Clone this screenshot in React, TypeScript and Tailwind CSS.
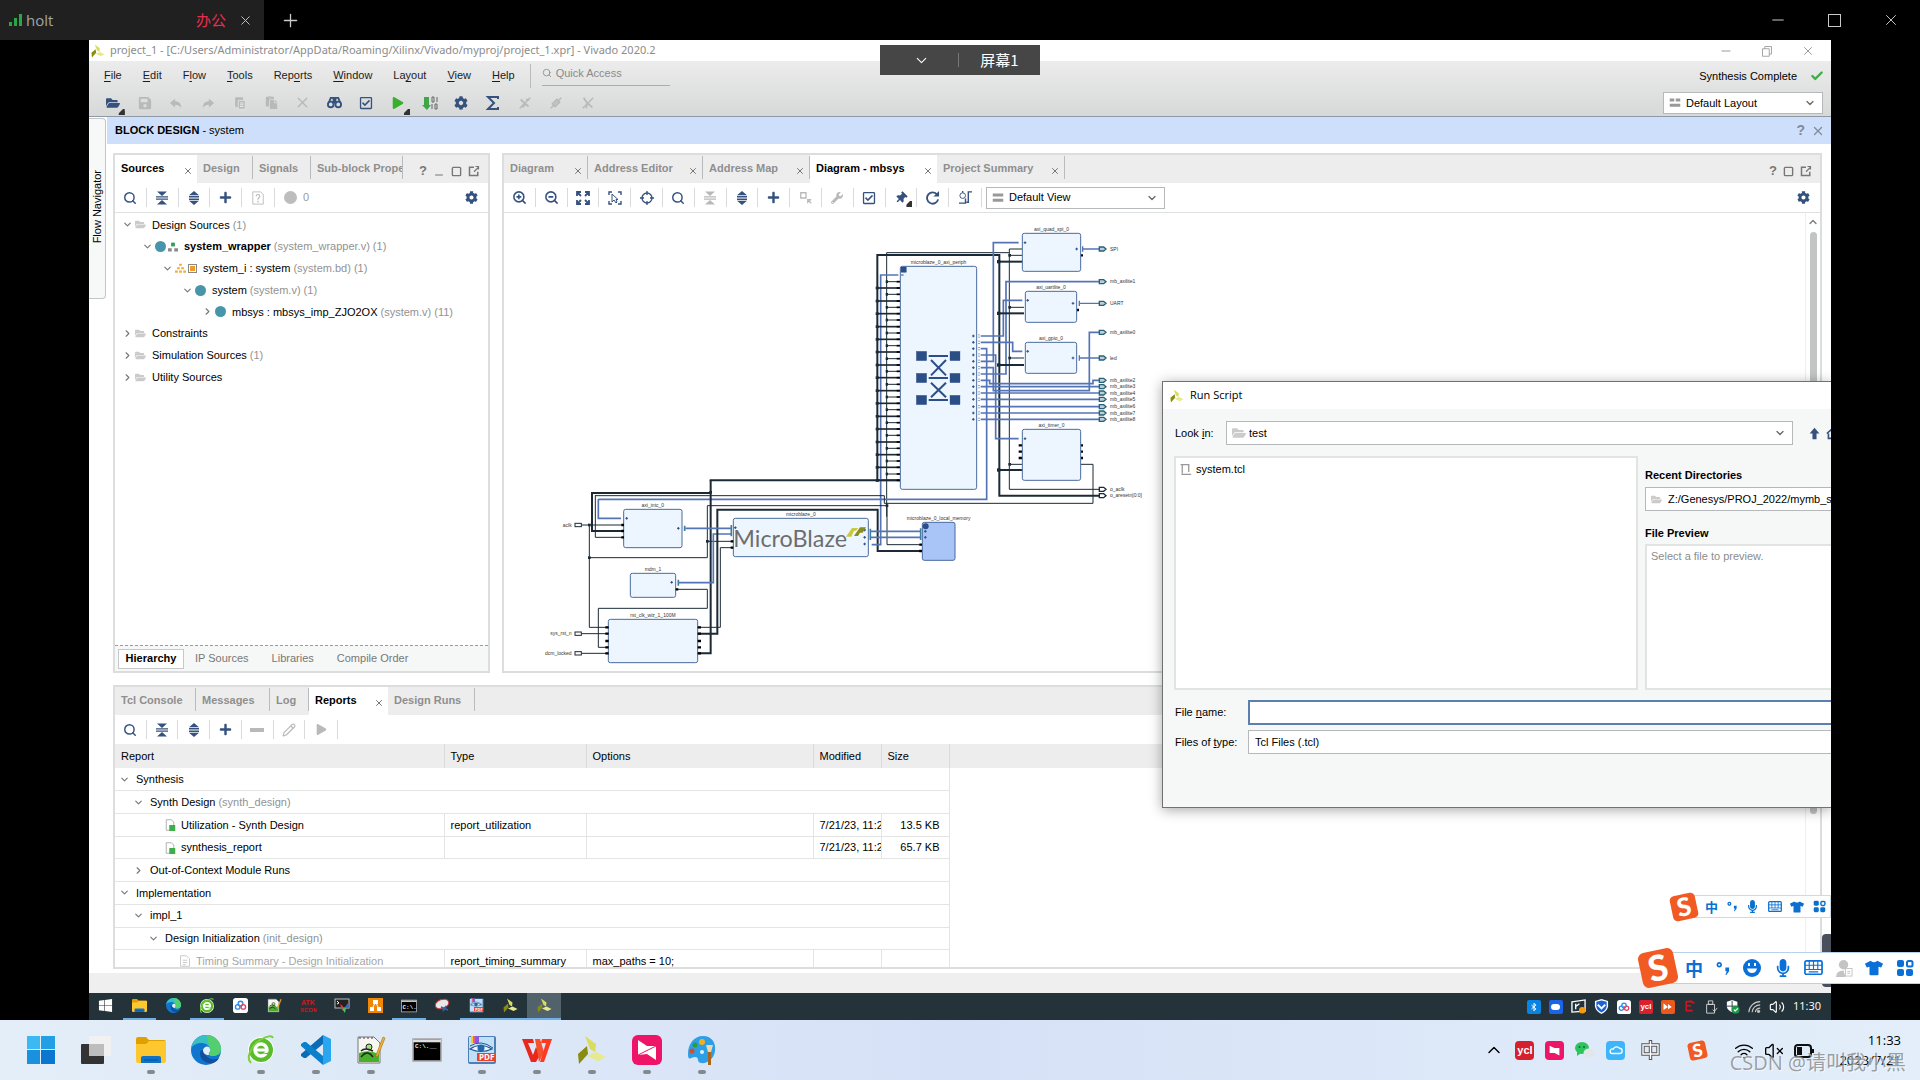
import type { ReactNode } from "react";
import {
  FaBinoculars,
  FaCog,
  FaCopy,
  FaFolderOpen,
  FaMicrophone,
  FaPaste,
  FaPlay,
  FaPlus,
  FaRegCheckSquare,
  FaSave,
  FaThumbtack,
  FaTshirt,
  FaWindows,
  FaWrench,
} from "react-icons/fa";
import {
  Check,
  ChevronDown,
  ChevronRight,
  ChevronUp,
  Minus,
  Pencil,
  Plus,
  Search,
  Square,
  Volume2,
  VolumeX,
  Wifi,
  X,
  ZoomIn,
  ZoomOut,
} from "lucide-react";

/* ---------- small drawings ---------- */

function Glyph({ children, size = 16, className = "" }: { children: ReactNode; size?: number; className?: string }) {
  return (
    <svg width={size} height={size} viewBox="0 0 16 16" fill="none" stroke="currentColor" className={className}>
      {children}
    </svg>
  );
}

function XilinxLogo({ size = 14 }: { size?: number }) {
  return (
    <svg width={size} height={size} viewBox="0 0 30 30">
      <path d="M8 1 L19 9 L18 17 L13 14 Z" fill="#d9dc5c" />
      <path d="M10 11 L11 19 L2 29 L1 19 Z" fill="#8a8c0e" />
      <path d="M10 21 L19 17 L29 22 L21 26 Z" fill="#e6e98c" />
    </svg>
  );
}

function Collapse() {
  return (
    <Glyph>
      <path d="M2 6.8 H14 M2 9.2 H14" strokeWidth="1.2" />
      <path d="M3 1.5 H13 L8 6 Z M3 14.5 H13 L8 10 Z" fill="currentColor" stroke="none" />
    </Glyph>
  );
}

function Expand() {
  return (
    <Glyph>
      <path d="M3 6.8 H13 M3 9.2 H13" strokeWidth="1.4" />
      <path d="M3 5.2 H13 L8 1 Z M3 10.8 H13 L8 15 Z" fill="currentColor" stroke="none" />
    </Glyph>
  );
}

function Fit() {
  return (
    <Glyph>
      <path d="M2 6 V2 H6 M10 2 H14 V6 M14 10 V14 H10 M6 14 H2 V10 M2 2 L6 6 M14 2 L10 6 M14 14 L10 10 M2 14 L6 10" strokeWidth="1.8" />
    </Glyph>
  );
}

function SelectArea() {
  return (
    <Glyph>
      <path d="M2 5 V2 H5 M11 2 H14 V5 M14 11 V14 H11 M5 14 H2 V11" strokeWidth="1.4" />
      <path d="M5 4 V12 L7 10 L9 13 L10 12 L9 9.5 H11 Z" />
    </Glyph>
  );
}

function Target() {
  return (
    <Glyph>
      <circle cx="8" cy="8" r="5" strokeWidth="1.3" />
      <path d="M8 1 V5 M8 11 V15 M1 8 H5 M11 8 H15" strokeWidth="1.3" />
    </Glyph>
  );
}

function Float() {
  return (
    <Glyph size={12}>
      <path d="M8 3 H2 V14 H13 V9" strokeWidth="2" />
      <path d="M8 9 L14 3 M10 2 H14 V6" strokeWidth="1.6" />
    </Glyph>
  );
}

function Bars() {
  return (
    <Glyph size={12} className="text-[#999]">
      <path d="M1 4 H15 M1 11 H15" strokeWidth="4" />
    </Glyph>
  );
}

function SogouLogo({ className }: { className: string }) {
  return (
    <svg viewBox="0 0 40 40" className={className}>
      <g transform="rotate(-12 20 20)">
        <rect x="3" y="3" width="34" height="34" rx="6" fill="#f15a22" />
        <text x="20" y="32" textAnchor="middle" fontSize="34" fontWeight="900" fontFamily="Lato, sans-serif" fill="#fff">
          S
        </text>
      </g>
    </svg>
  );
}

function EdgeIcon({ size }: { size: number }) {
  return (
    <svg width={size} height={size} viewBox="0 0 30 30">
      <circle cx="15" cy="15" r="15" fill="#0f76cf" />
      <path d="M0 13 C2 4 9 0 15 0 C24 0 30 7 30 14 C30 19 26 21 22 21 C18 21 17 19 19 17 C20 12 16 8 11 8 C6 8 2 10 0 13 Z" fill="#37bfc4" />
      <path d="M16 0 C24 0 30 7 30 14 C30 19 26 21 22 21 C18 21 17 19 19 17 C20 14 19 12 18 11 Z" fill="#55cf6e" />
      <path d="M9 18 C9 25 15 29 22 28 C25 27 27 25 28 23 C22 26 15 24 12 15 C10 15 9 16 9 18 Z" fill="#124f9c" />
      <path d="M12 15 C13 11 18 10 19 14 C20 17 17 17 18 20 C14 20 12 18 12 15 Z" fill="#e3edf9" />
    </svg>
  );
}

function GreenE({ size }: { size: number }) {
  return (
    <svg width={size} height={size} viewBox="0 0 30 30">
      <circle cx="15" cy="15" r="13" fill="#fff" />
      <circle cx="15" cy="15" r="12" fill="#59bd2b" />
      <circle cx="15" cy="15" r="6" fill="none" stroke="#fff" strokeWidth="3.4" />
      <path d="M9 15 H22" stroke="#fff" strokeWidth="3" />
      <path d="M16 19 H24 V17 Z" fill="#59bd2b" />
      <path d="M5 28 C0 24 4 11 14 5 C21 1 26 0 27 3" fill="none" stroke="#7ccf3e" strokeWidth="2" />
    </svg>
  );
}

function Explorer({ size }: { size: number }) {
  return (
    <svg width={size} height={size} viewBox="0 0 30 30">
      <path d="M0 4 Q0 2 2 2 H10 L13 5 H28 Q30 5 30 7 V12 H0 Z" fill="#e0a100" />
      <path d="M0 9 H10 L13 6 H30 V26 Q30 28 28 28 H2 Q0 28 0 26 Z" fill="#fdc72f" />
      <path d="M5 28 V23 Q5 21 7 21 H23 Q25 21 25 23 V28 Z" fill="#1173c7" />
      <path d="M8 25 H22" stroke="#0b4f90" strokeWidth="1" />
    </svg>
  );
}

function Notepad({ size }: { size: number }) {
  return (
    <svg width={size} height={size} viewBox="0 0 30 30">
      <path d="M2 2 H18 L24 8 V28 H2 Z" fill="#f7f7f2" stroke="#777" />
      <path d="M3 18 Q12 14 23 19 V27 H3 Z" fill="#48b02c" />
      <path d="M4 2 V4 M8 2 V4 M12 2 V4 M16 2 V4" stroke="#444" />
      <circle cx="13" cy="12" r="3" fill="#a8e27c" stroke="#222" />
      <path d="M5 16 Q9 12 17 16 M7 20 Q12 15 17 22 M5 22 L9 18" stroke="#222" strokeWidth="1.5" fill="none" />
      <path d="M27 2 L29 3 L22 21 L20 22 V20 Z" fill="#f2b233" stroke="#a66a14" strokeWidth="0.6" />
    </svg>
  );
}

function Terminal({ size, label }: { size: number; label: string }) {
  return (
    <svg width={size} height={size} viewBox="0 0 30 30">
      <rect x="1" y="4" width="28" height="22" fill="#000" stroke="#aaa" strokeWidth="1.6" />
      <path d="M1 6 H29" stroke="#ddd" strokeWidth="2.6" />
      <text x="3" y={label.length > 4 ? 13 : 20} fontSize={label.length > 4 ? 6 : 11} fontFamily="Liberation Mono, monospace" fontWeight="700" fill="#eee">
        {label}
      </text>
    </svg>
  );
}

function PdfEye({ size }: { size: number }) {
  return (
    <svg width={size} height={size} viewBox="0 0 30 30">
      <rect x="1" y="1" width="28" height="28" rx="2" fill="#4d7fb5" />
      <rect x="2" y="2" width="25" height="25" fill="#bfe0f6" />
      <path d="M4 1 H6 V8 H4 Z" fill="#f2ce2b" />
      <path d="M6 1 H8 V8 H6 Z" fill="#e85a9b" />
      <path d="M8 1 H12 V8 H8 Z" fill="#8a5be0" />
      <path d="M3 14 Q13 7 25 14 Q14 19 3 14 Z" fill="#eef7ff" stroke="#21588f" strokeWidth="1.2" />
      <path d="M3 11 Q14 4 26 13" fill="none" stroke="#21588f" />
      <circle cx="14" cy="13" r="3.5" fill="#1f68ad" />
      <rect x="10" y="18" width="18" height="8" fill="#e8432a" />
      <text x="12" y="25" fontSize="8" fontWeight="700" fontFamily="Open Sans, sans-serif" fill="#fff">
        PDF
      </text>
    </svg>
  );
}

function CloudRings({ size }: { size: number }) {
  return (
    <svg width={size} height={size} viewBox="0 0 16 16">
      <rect width="16" height="16" rx="3" fill="#fff" />
      <circle cx="8" cy="6" r="2.5" fill="none" stroke="#2a8df0" strokeWidth="1.5" />
      <circle cx="5" cy="9.5" r="2.4" fill="none" stroke="#2a8df0" strokeWidth="1.5" />
      <circle cx="11" cy="9.5" r="2.4" fill="none" stroke="#e8415f" strokeWidth="1.5" />
    </svg>
  );
}

/* ---------- shared controls ---------- */

function IconButton({ label, muted, children, menu }: { label: string; muted?: boolean; children: ReactNode; menu?: boolean }) {
  return (
    <button
      aria-label={label}
      className={`relative flex items-center justify-center ${muted ? "text-[#b9b9b9]" : "text-[#35527f]"}`}
    >
      {children}
      {menu && (
        <span className="absolute right-1 bottom-0 border-4 border-t-transparent border-l-transparent border-r-[#333] border-b-[#333] [clip-path:inset(2px_0_0_2px)]" />
      )}
    </button>
  );
}

type Tool = [string, ReactNode, ("muted" | "menu")?];

function ToolStrip({ tools, className }: { tools: Tool[]; className: string }) {
  return (
    <div className={`grid h-[19px] divide-x divide-[#d8dadb] border-r border-[#d8dadb] ${className}`}>
      {tools.map(([label, icon, kind], i) => (
        <IconButton key={i} label={label} muted={kind === "muted"} menu={kind === "menu"}>
          {icon}
        </IconButton>
      ))}
    </div>
  );
}

interface TabDef {
  name: string;
  width: string;
  active?: boolean;
  closable?: boolean;
}

function TabRow({ tabs, children }: { tabs: TabDef[]; children?: ReactNode }) {
  return (
    <div className="flex h-[28px] shrink-0 items-stretch bg-[#ededed] font-bold text-[#8f8f8f]">
      {tabs.map((t) => (
        <div key={t.name} className={`flex items-stretch overflow-hidden ${t.width} ${t.active ? "bg-white text-black" : ""}`}>
          <button className="flex-1 overflow-hidden pb-px pl-[6px] text-left whitespace-nowrap">{t.name}</button>
          {t.closable && (
            <button aria-label={`Close ${t.name}`} className="w-[14px] shrink-0 pt-1 text-[#777]">
              <X size={10} strokeWidth={2.4} />
            </button>
          )}
          {!t.active && <span className="mt-px mb-1 w-px bg-[#b8bcbf]" />}
        </div>
      ))}
      <div className="ml-auto flex items-center gap-[6px] pt-1 pr-[8px] text-[#777]">{children}</div>
    </div>
  );
}

function Picker({ label, value, className, icon }: { label: string; value: string; className: string; icon?: ReactNode }) {
  return (
    <span className={`relative flex shrink-0 items-center border border-[#b5b9bc] bg-white ${className}`}>
      {icon && <span className="pointer-events-none absolute left-[5px]">{icon}</span>}
      <select aria-label={label} className={`h-full w-full appearance-none bg-transparent text-black outline-none ${icon ? "pl-[22px]" : "pl-[6px]"}`}>
        <option>{value}</option>
      </select>
      <ChevronDown size={12} strokeWidth={2.5} className="pointer-events-none absolute right-[6px] text-[#666]" />
    </span>
  );
}

/* ---------- application header ---------- */

const menus = [
  ["", "F", "ile"],
  ["", "E", "dit"],
  ["F", "l", "ow"],
  ["", "T", "ools"],
  ["Rep", "o", "rts"],
  ["", "W", "indow"],
  ["La", "y", "out"],
  ["", "V", "iew"],
  ["", "H", "elp"],
];

const sigma = (
  <Glyph>
    <path d="M13 4 V2 H3 L9 8 L3 14 H13 V12" strokeWidth="2" />
  </Glyph>
);

const struck = (d: string) => (
  <Glyph size={14}>
    <path d={d} strokeWidth="2" />
    <path d="M2 14 L14 2" strokeWidth="1.6" />
  </Glyph>
);

const mainTools: Tool[] = [
  ["Open", <FaFolderOpen size={14} />, "menu"],
  ["Save", <FaSave size={14} />, "muted"],
  ["Undo", <Glyph size={14}><path d="M1 8 L7 3 V6 Q14 6 14 14 Q12 10 7 10 V13 Z" fill="currentColor" stroke="none" /></Glyph>, "muted"],
  ["Redo", <Glyph size={14}><path d="M15 8 L9 3 V6 Q2 6 2 14 Q4 10 9 10 V13 Z" fill="currentColor" stroke="none" /></Glyph>, "muted"],
  [
    "Copy",
    <Glyph size={14}>
      <path d="M3 2 H11 V12 H3 Z" fill="currentColor" />
      <path d="M6 5 H14 V15 H6 Z" fill="currentColor" stroke="#e4e4e4" />
      <path d="M8 8 H12 M8 10 H12 M8 12 H12" stroke="#eee" />
    </Glyph>,
    "muted",
  ],
  ["Paste", <FaPaste size={13} />, "muted"],
  ["Delete", <X size={17} />, "muted"],
  [
    "Find",
    <Glyph size={15}>
      <circle cx="4" cy="10" r="3" strokeWidth="2" />
      <circle cx="12" cy="10" r="3" strokeWidth="2" />
      <path d="M2 8 L4 3 H7 V9 M14 8 L12 3 H9 V9 M7 6 H9" strokeWidth="2" />
    </Glyph>,
  ],
  ["Validate", <FaRegCheckSquare size={14} />],
  ["Run", <FaPlay size={12} className="text-[#38b02c]" />, "menu"],
  [
    "Generate bitstream",
    <Glyph>
      <path d="M2 2 H7 V10 H9 L5 15 L0 10 H2 Z" fill="#3fa64a" stroke="none" />
      <path d="M10 2 H12 V7 H10 Z M15 2 V7 M10 9 V14 M13 9 H15 V14 H13 Z" stroke="#666" />
    </Glyph>,
  ],
  ["Settings", <FaCog size={14} />],
  ["Report", sigma],
  ["Unhighlight", struck("M3 4 L12 12 M5 13 L9 9 M9 4 H13"), "muted"],
  ["Unmark", struck("M4 9 L9 4 L12 7 L7 12 Z"), "muted"],
  ["Clear", struck("M3 2 L7 8 L6 14 M7 8 L13 13"), "muted"],
];

function AppHeader() {
  return (
    <>
      <div className="flex h-[21px] items-center bg-white pl-[2px] font-['Noto_Sans',sans-serif] text-[11px] text-[#8b8b8b]">
        <XilinxLogo />
        <span className="ml-[5px] whitespace-nowrap">
          project_1 - [C:/Users/Administrator/AppData/Roaming/Xilinx/Vivado/myproj/project_1.xpr] - Vivado 2020.2
        </span>
        <div className="ml-auto flex w-[112px] items-center justify-between pr-[16px]">
          <button aria-label="Minimize"><Minus size={14} strokeWidth={1.5} /></button>
          <button aria-label="Restore">
            <Glyph size={12}><path d="M2 5 H11 V15 H2 Z M5 5 V2 H14 V12 H11" /></Glyph>
          </button>
          <button aria-label="Close"><X size={14} strokeWidth={1.5} /></button>
        </div>
      </div>
      <header className="flex h-[56px] justify-between border-b border-[#8d99a5] bg-linear-to-b from-[#ececec] to-[#d7d8d8]">
        <div>
          <div className="flex h-[29px] items-center">
            <nav className="flex gap-[21px] pl-[15px] text-[#1c1c1c]">
              {menus.map(([a, u, b]) => (
                <button key={a + u + b}>{a}<span className="underline underline-offset-2">{u}</span>{b}</button>
              ))}
            </nav>
            <div className="ml-[15px] flex h-6 items-center border-l border-[#bbb] pl-[11px]">
              <label className="flex h-5 w-[128px] items-center gap-1 border-b border-[#a9aeb2] pb-1 text-[#8b8b8b]">
                <Search size={10} className="shrink-0" />
                <input aria-label="Quick Access" placeholder="Quick Access" className="w-full bg-transparent outline-none placeholder:text-[#8b8b8b]" />
              </label>
            </div>
          </div>
          <div className="ml-2 grid h-[26px] w-[507px] grid-cols-16 pb-px">
            {mainTools.map(([label, icon, kind]) => (
              <IconButton key={label} label={label} muted={kind === "muted"} menu={kind === "menu"}>
                {icon}
              </IconButton>
            ))}
          </div>
        </div>
        <div className="flex flex-col items-end pr-[8px]">
          <div className="flex h-[31px] items-center gap-[13px] pb-px text-black">
            Synthesis Complete
            <Check size={14} strokeWidth={4} className="-mr-px text-[#3fae49]" />
          </div>
          <Picker
            label="Layout"
            value="Default Layout"
            className="h-[22px] w-[160px]"
            icon={<Glyph size={12} className="text-[#999]"><path d="M1 4 H7 M9 4 H15 M1 11 H15" strokeWidth="4" /></Glyph>}
          />
        </div>
      </header>
    </>
  );
}

/* ---------- sources panel ---------- */

const dot = <span className="h-[11px] w-[11px] rounded-full bg-[#4695aa]" />;
const folder = <FaFolderOpen size={11} className="text-[#cbcbcb]" />;
const modules = (
  <Glyph size={10}>
    <path d="M5 1 H11 V7 H5 Z" fill="#2f9e52" stroke="none" />
    <path d="M0 10 H6 V15 H0 Z M10 10 H16 V15 H10 Z" fill="#8a8a8a" stroke="none" />
  </Glyph>
);
const blockDesign = (
  <>
    <Glyph size={11}>
      <path d="M6 1 H10 V4 H6 Z M3 6 H7 V9 H3 Z M9 6 H13 V9 H9 Z M0 11 H4 V14 H0 Z M6 11 H10 V14 H6 Z M12 11 H16 V14 H12 Z" fill="#f0ad3a" stroke="none" />
    </Glyph>
    <span className="flex h-[9px] w-[9px] items-center justify-center border border-[#888] bg-white">
      <span className="h-[5px] w-[5px] bg-[#f19a2b]" />
    </span>
  </>
);

const tree = [
  { pad: "pl-[7px]", open: true, icon: folder, name: "Design Sources", note: "(1)" },
  { pad: "pl-[27px]", open: true, icon: <>{dot}{modules}</>, name: "system_wrapper", note: "(system_wrapper.v) (1)", bold: true },
  { pad: "pl-[47px]", open: true, icon: blockDesign, name: "system_i : system", note: "(system.bd) (1)" },
  { pad: "pl-[67px]", open: true, icon: dot, name: "system", note: "(system.v) (1)" },
  { pad: "pl-[87px]", open: false, icon: dot, name: "mbsys : mbsys_imp_ZJO2OX", note: "(system.v) (11)" },
  { pad: "pl-[7px]", open: false, icon: folder, name: "Constraints", note: "" },
  { pad: "pl-[7px]", open: false, icon: folder, name: "Simulation Sources", note: "(1)" },
  { pad: "pl-[7px]", open: false, icon: folder, name: "Utility Sources", note: "" },
];

const sourceTools: Tool[] = [
  ["Search", <Search size={14} strokeWidth={2.5} />],
  ["Collapse all", <Collapse />],
  ["Expand all", <Expand />],
  ["Add sources", <FaPlus size={13} />],
  ["Report", <Glyph size={14}><path d="M2 1 H11 L14 4 V15 H2 Z" /><path d="M6 6 Q6 4 8 4 Q10 4 10 6 Q10 7 8 9 V10 M8 11 V13" strokeWidth="1.4" /></Glyph>, "muted"],
];

function SourcesPanel() {
  return (
    <section className="flex w-[377px] shrink-0 flex-col border-2 border-[#dcdddd] bg-white">
      <TabRow
        tabs={[
          { name: "Sources", width: "w-[82px]", active: true, closable: true },
          { name: "Design", width: "w-[56px]" },
          { name: "Signals", width: "w-[58px]" },
          { name: "Sub-block Prope", width: "w-[92px]" },
        ]}
      >
        <b className="text-[13px]">?</b>
        <Minus size={12} className="mt-2" />
        <Square size={11} strokeWidth={3} />
        <Float />
      </TabRow>
      <div className="flex h-[30px] shrink-0 items-center border-b border-[#dfe0e0]">
        <ToolStrip tools={sourceTools} className="w-[160px] grid-cols-5" />
        <span className="ml-[9px] h-[13px] w-[13px] rounded-full bg-[#bdbdbd]" />
        <span className="ml-[6px] text-[#9a9a9a]">0</span>
        <button aria-label="Settings" className="mr-[10px] ml-auto text-[#35527f]"><FaCog size={13} /></button>
      </div>
      <div className="mt-px grid h-[174px] grid-rows-8">
        {tree.map((n) => (
          <div key={n.name} className={`flex items-center ${n.pad}`}>
            <button aria-label={`Toggle ${n.name}`} className="mr-[2px] text-[#777]">
              {n.open ? <ChevronDown size={11} strokeWidth={2.5} /> : <ChevronRight size={11} strokeWidth={2.5} />}
            </button>
            <span className="flex items-center gap-[2px]">{n.icon}</span>
            <span className={`ml-[6px] text-black ${n.bold ? "font-bold" : ""}`}>{n.name}</span>
            <span className="ml-[3px] text-[#929292]">{n.note}</span>
          </div>
        ))}
      </div>
      <div className="mt-auto flex h-[26px] items-center border-t border-dashed border-[#9c9c9c] bg-[#f6f7f7] pl-[3px] text-[#777]">
        <button className="h-5 w-[66px] border border-[#c6c8c9] bg-white font-bold text-black">Hierarchy</button>
        <button className="ml-[11px]">IP Sources</button>
        <button className="ml-[23px]">Libraries</button>
        <button className="ml-[23px]">Compile Order</button>
      </div>
    </section>
  );
}

/* ---------- block diagram ---------- */

const BLUE = "#5474b6";
const INK = "#1b2a36";

function Wire({ d, blue, thick }: { d: string; blue?: boolean; thick?: boolean }) {
  return <path d={d} fill="none" stroke={blue ? BLUE : INK} strokeWidth={blue ? 5 : thick ? 6 : 3} />;
}

function Block({ x, y, w, h, name, fill = "#edf6ff" }: { x: number; y: number; w: number; h: number; name: string; fill?: string }) {
  return (
    <>
      <rect x={x} y={y} width={w} height={h} rx="6" fill={fill} stroke="#4a6a9f" strokeWidth="3" />
      <text x={x + w / 2} y={y - 6} textAnchor="middle">{name}</text>
    </>
  );
}

function Port({ x, y, name, kind }: { x: number; y: number; name: string; kind: "bus" | "pin" | "in" }) {
  if (kind === "in") {
    return (
      <>
        <rect x={x} y={y - 5} width="19" height="10" fill="#fff" stroke={INK} strokeWidth="3" />
        <text x={x - 10} y={y + 5} textAnchor="end">{name}</text>
      </>
    );
  }
  return (
    <>
      <path d={`M${x} ${y - 6} h13 l7 6 l-7 6 h-13 Z`} fill={kind === "bus" ? "#b8d0d8" : "#fff"} stroke={kind === "bus" ? "#2a6175" : INK} strokeWidth="4" />
      <text x={x + 32} y={y + 5}>{name}</text>
    </>
  );
}

const masterPorts = [378, 397, 416, 435, 454, 473, 492, 511, 530, 549, 568, 590, 609, 628];
const outputs: [number, string][] = [
  [117, "SPI"],
  [215, "mb_axilite1"],
  [280, "UART"],
  [367, "mb_axilite0"],
  [444, "led"],
  [511, "mb_axilite2"],
  [530, "mb_axilite3"],
  [549, "mb_axilite4"],
  [568, "mb_axilite5"],
  [590, "mb_axilite6"],
  [609, "mb_axilite7"],
  [628, "mb_axilite8"],
];

// Drawn at three units to the pixel; each group holds one half of the design.
function Diagram() {
  const pins = Array.from({ length: 32 }, (_, i) => Math.round(215 + i * 19.22));
  return (
    <svg width="640" height="456" viewBox="0 0 1920 1368" fontFamily="Liberation Sans, sans-serif" fontSize="15" fill="#333" className="shrink-0">
      <g transform="translate(1068 -9)">
        <Wire d="M120 811 H-451" thick />
        <Wire d="M52 811 V135 H418 V857 H718" thick />
        <Wire d="M80 920 V128 H448 M487 117 H448 V838 H718" />
        <Wire d="M115 195 H62 V1004" blue />
        {pins.map((y, i) => (
          <g key={y}>
            <path d={`M${i % 2 ? 52 : 80} ${y} H120`} stroke={INK} strokeWidth={i % 2 ? 5 : 3} />
            <path d={`M110 ${y} H120`} stroke="#000" strokeWidth="5" />
            <rect x={i % 2 ? 47 : 77} y={y - 4} width={i % 2 ? 9 : 7} height="8" fill={INK} />
          </g>
        ))}
        <Wire d="M362 378 H430 V271 H487" blue />
        <Wire d="M362 397 H458 V424 H487" blue />
        <Wire d="M362 416 H380 V868 H-785" blue />
        <Wire d="M362 435 H407 V686 H476" blue />
        <Wire d="M362 454 H400 V98 H476" blue />
        <Wire d="M362 473 H400 V542 H688 V367 H718" blue />
        <Wire d="M362 492 H438 V215 H718" blue />
        <Wire d="M362 511 H389 V521 H699 V511 H718" blue />
        {[530, 549, 568, 590, 609, 628].map((y) => (
          <Wire key={y} d={`M362 ${y} H718`} blue />
        ))}
        {[117, 280, 444].map((y) => (
          <path key={y} d={`M${y === 117 ? 668 : 658} ${y} H718 M${y === 117 ? 668 : 658} ${y - 8} V${y + 8}`} stroke={BLUE} strokeWidth="4" />
        ))}
        {[[136, 155], [292, 310], [444, 465], [763, 780]].map(([a, b]) => (
          <g key={a}>
            <Wire d={`M448 ${a} H492`} />
            <Wire d={`M416 ${b} H492`} thick />
            <rect x="445" y={a - 4} width="8" height="8" fill={INK} />
            <rect x="411" y={b - 5} width="10" height="10" fill={INK} />
          </g>
        ))}
        <path d="M476 706 H487 M476 725 H487 M476 744 H487 M662 706 H669 M662 725 H669 M662 744 H669 M662 136 H669 M650 300 H657" stroke="#000" strokeWidth="7" />
        <Wire d="M662 763 H699 V880 H73 V857 H-795" />
        <Block x={121} y={169} w={229} h={669} name="microblaze_0_axi_periph" />
        <Block x={487} y={70} w={175} h={114} name="axi_quad_spi_0" />
        <Block x={496} y={244} w={154} h={93} name="axi_uartlite_0" />
        <Block x={496} y={397} w={154} h={93} name="axi_gpio_0" />
        <Block x={487} y={658} w={175} h={153} name="axi_timer_0" />
        <g fill="#2c4e86" stroke="#2c4e86">
          <rect x="123" y="171" width="16" height="16" />
          {[424, 490, 556].map((y) => (
            <g key={y}>
              <rect x="169" y={y} width="31" height="28" />
              <rect x="270" y={y} width="30" height="28" />
              <path d={`M206 ${y + 14} H264`} strokeWidth="6" />
            </g>
          ))}
          <path d="M213 450 L258 496 M258 450 L213 496 M213 518 L258 562 M258 518 L213 562" strokeWidth="6" />
          {masterPorts.map((y) => (
            <path key={y} d={`M336 ${y} h8 M340 ${y - 4} v8 M357 ${y - 5} v3 M357 ${y + 2} v3`} strokeWidth="3" />
          ))}
          <path d="M491 98 h8 M495 94 v8 M499 271 h8 M503 267 v8 M499 424 h8 M503 420 v8 M491 686 h8 M495 682 v8 M646 117 h8 M650 113 v8 M635 280 h8 M639 276 v8 M635 444 h8 M639 440 v8 M123 195 h8" strokeWidth="3" />
        </g>
        {outputs.map(([y, name]) => (
          <Port key={name} x={718} y={y} name={name} kind="bus" />
        ))}
        <Port x={718} y={838} name="o_aclk" kind="pin" />
        <Port x={718} y={857} name="o_aresetn[0:0]" kind="pin" />
      </g>
      <g transform="translate(78 741)">
        <Wire d="M281 213 H186 V99 H542" thick />
        <Wire d="M542 61 V580 H503" thick />
        <Wire d="M281 232 H196 V106" />
        <Wire d="M273 175 H205 V117" blue />
        <Wire d="M154 195 H281 M178 195 V502 H235 M178 293 H532 V137 H1071 M532 244 H610" />
        <Wire d="M1071 130 V254 H1176" />
        <Wire d="M445 368 H550 V222 H603" blue />
        <Wire d="M437 388 H532 V445 H205 V562 H235" />
        <Wire d="M503 502 H571 V263 H610" />
        <Wire d="M503 521 H562 V149 H1043 V273 H1176" thick />
        <Wire d="M154 521 H235 M154 580 H235" />
        <Wire d="M466 205 H603 M1022 214 H1172 M1022 232 H1172 M1025 254 H1054" blue />
        <path d="M464 197 V213 M445 359 V377 M604 195 V229 M1021 206 V240 M1172 205 V240" stroke="#3f7f9c" strokeWidth="5" />
        {[[178, 195], [178, 293], [532, 244], [1071, 137], [1042, 61], [542, 97]].map(([x, y]) => (
          <rect key={`${x}-${y}`} x={x - 4} y={y - 4} width="8" height="8" fill={INK} />
        ))}
        <Block x={281} y={148} w={175} h={115} name="axi_intc_0" />
        <Block x={301} y={340} w={136} h={72} name="mdm_1" />
        <Block x={235} y={478} w={268} h={130} name="rst_clk_wiz_1_100M" />
        <Block x={610} y={175} w={405} h={115} name="microblaze_0" />
        <Block x={1177} y={187} w={98} h={114} name="microblaze_0_local_memory" fill="#a9c4f6" />
        <path d="M274 195 h8 M274 213 h8 M274 232 h8 M226 502 h10 M226 521 h10 M226 543 h10 M226 562 h10 M226 580 h10 M503 502 h10 M503 521 h10 M503 543 h10 M503 562 h10 M503 580 h10 M437 388 h8 M602 244 h8 M602 263 h8 M1168 254 h8 M1168 273 h8" stroke="#000" strokeWidth="7" />
        <path d="M286 175 h8 M290 171 v8 M441 205 h8 M445 201 v8 M421 367 h8 M425 363 v8 M612 203 h8 M616 199 v8 M1000 210 h8 M1004 206 v8 M1000 232 h8 M1004 228 v8 M1000 252 h8 M1004 248 v8 M1182 214 h8 M1186 210 v8 M1182 232 h8 M1186 228 v8" stroke="#2c4e86" strokeWidth="3" />
        <circle cx="1187" cy="199" r="9" fill="#2c4e86" />
        <text x="610" y="262" fontSize="70" fontFamily="Lato, sans-serif" fill="#6d6d6d">MicroBlaze</text>
        <path d="M948 230 L966 204 H984 L978 212 H972 L964 230 Z" fill="#c9c93c" />
        <path d="M972 228 L990 202 H1008 L998 218 H990 L984 228 Z" fill="#8a8c1c" />
        <Port x={135} y={195} name="aclk" kind="in" />
        <Port x={135} y={521} name="sys_rst_n" kind="in" />
        <Port x={135} y={580} name="dcm_locked" kind="in" />
      </g>
    </svg>
  );
}

const diagramTools: Tool[] = [
  ["Zoom in", <ZoomIn size={15} strokeWidth={2.5} />],
  ["Zoom out", <ZoomOut size={15} strokeWidth={2.5} />],
  ["Zoom fit", <Fit />],
  ["Select area", <SelectArea />],
  ["Fit selection", <Target />],
  ["Search", <Search size={14} strokeWidth={2.5} />],
  ["Collapse", <Collapse />, "muted"],
  ["Expand", <Expand />],
  ["Add IP", <FaPlus size={13} />],
  ["Make external", <Glyph size={14}><path d="M2 2 H8 V8 H2 Z M10 10 L14 14 M10 14 V10 H14" strokeWidth="1.5" /></Glyph>, "muted"],
  ["Customize", <FaWrench size={12} />, "muted"],
  ["Validate design", <FaRegCheckSquare size={14} />],
  ["Pin", <FaThumbtack size={12} className="rotate-45" />, "menu"],
  ["Regenerate layout", <Glyph size={15}><path d="M13 5 A6 6 0 1 0 14 10" strokeWidth="2" /><path d="M15 1 V7 H9 Z" fill="currentColor" stroke="none" /></Glyph>],
  ["Optimize routing", <Glyph size={15}><circle cx="5" cy="6" r="3" /><path d="M5 1 V3 M1 14 H8 V9 M15 2 H11 V13 H9" strokeWidth="1.5" /></Glyph>],
];

function DiagramPanel() {
  return (
    <section className="flex min-w-0 flex-1 flex-col border-2 border-[#dcdddd] bg-white">
      <TabRow
        tabs={[
          { name: "Diagram", width: "w-[84px]", closable: true },
          { name: "Address Editor", width: "w-[115px]", closable: true },
          { name: "Address Map", width: "w-[107px]", closable: true },
          { name: "Diagram - mbsys", width: "w-[127px]", active: true, closable: true },
          { name: "Project Summary", width: "w-[128px]", closable: true },
        ]}
      >
        <b className="text-[13px]">?</b>
        <Square size={11} strokeWidth={3} />
        <Float />
      </TabRow>
      <div className="flex h-[30px] shrink-0 items-center border-b border-[#dfe0e0]">
        <ToolStrip tools={diagramTools} className="w-[478px] grid-cols-15" />
        <Picker label="View" value="Default View" className="ml-1 h-[22px] w-[179px]" icon={<Bars />} />
        <button aria-label="Settings" className="mr-[10px] ml-auto text-[#35527f]"><FaCog size={13} /></button>
      </div>
      <div className="flex min-h-0 flex-1 overflow-hidden">
        <Diagram />
        <div className="ml-auto flex w-[15px] flex-col items-center border-l border-[#eee] pt-[3px]">
          <ChevronUp size={12} strokeWidth={2.5} className="text-[#777]" />
          <span className="mt-1 h-[390px] w-[7px] rounded-full bg-[#c3c4c4]" />
        </div>
      </div>
    </section>
  );
}

/* ---------- reports panel ---------- */

const reportTools: Tool[] = [
  ["Search", <Search size={14} strokeWidth={2.5} />],
  ["Collapse all", <Collapse />],
  ["Expand all", <Expand />],
  ["Add report", <FaPlus size={13} />],
  ["Remove report", <Glyph><path d="M1 8 H15" strokeWidth="4" /></Glyph>, "muted"],
  ["Edit", <Pencil size={14} />, "muted"],
  ["Run", <FaPlay size={11} />, "muted"],
];

const done = (
  <Glyph size={12}>
    <path d="M3 1 H10 L13 4 V15 H3 Z" stroke="#999" />
    <path d="M7 8 H15 V16 H7 Z" fill="#3fae49" stroke="none" />
  </Glyph>
);
const pending = (
  <Glyph size={12} className="text-[#bbb]">
    <path d="M2 1 H10 L14 5 V15 H2 Z M5 7 H11 M5 10 H11 M5 13 H9" />
  </Glyph>
);

interface ReportRow {
  pad: string;
  name: string;
  note?: string;
  open?: boolean;
  icon?: ReactNode;
  cells?: [string, string, string, string];
}

const reports: ReportRow[] = [
  { pad: "pl-[4px]", name: "Synthesis", open: true },
  { pad: "pl-[18px]", name: "Synth Design", note: "(synth_design)", open: true },
  { pad: "pl-[49px]", name: "Utilization - Synth Design", icon: done, cells: ["report_utilization", "", "7/21/23, 11:29 AM", "13.5 KB"] },
  { pad: "pl-[49px]", name: "synthesis_report", icon: done, cells: ["", "", "7/21/23, 11:29 AM", "65.7 KB"] },
  { pad: "pl-[18px]", name: "Out-of-Context Module Runs", open: false },
  { pad: "pl-[4px]", name: "Implementation", open: true },
  { pad: "pl-[18px]", name: "impl_1", open: true },
  { pad: "pl-[33px]", name: "Design Initialization", note: "(init_design)", open: true },
  { pad: "pl-[64px]", name: "Timing Summary - Design Initialization", icon: pending, cells: ["report_timing_summary", "max_paths = 10;", "", ""] },
];

function ReportsPanel() {
  return (
    <section className="flex h-[284px] flex-col overflow-hidden border-2 border-[#dcdddd] bg-white">
      <TabRow
        tabs={[
          { name: "Tcl Console", width: "w-[81px]" },
          { name: "Messages", width: "w-[74px]" },
          { name: "Log", width: "w-[39px]" },
          { name: "Reports", width: "w-[79px]", active: true, closable: true },
          { name: "Design Runs", width: "w-[87px]" },
        ]}
      />
      <div className="flex h-[29px] shrink-0 items-center">
        <ToolStrip tools={reportTools} className="w-[223px] grid-cols-7" />
      </div>
      <div className="flex min-h-0 flex-1 overflow-hidden">
        <table className="h-[229px] w-full table-fixed border-collapse text-left text-black">
          <colgroup>
            <col className="w-[329px]" />
            <col className="w-[142px]" />
            <col className="w-[227px]" />
            <col className="w-[68px]" />
            <col className="w-[68px]" />
            <col />
          </colgroup>
          <thead className="bg-[#ededed]">
            <tr className="h-[24px]">
              {["Report", "Type", "Options", "Modified", "Size", ""].map((h) => (
                <th key={h} className="border-r border-[#d9dbdb] pl-[6px] font-normal last:border-r-0">{h}</th>
              ))}
            </tr>
          </thead>
          <tbody>
            {reports.map((r) => (
              <tr key={r.name} className="h-[22px]">
                <td colSpan={r.cells ? 1 : 5} className={`border-r border-b border-[#e3e5e5] ${r.pad}`}>
                  <span className="flex items-center">
                    {r.icon ? (
                      <span className="mr-[5px]">{r.icon}</span>
                    ) : (
                      <button aria-label={`Toggle ${r.name}`} className="mr-[6px] text-[#777]">
                        {r.open ? <ChevronDown size={11} strokeWidth={2.5} /> : <ChevronRight size={11} strokeWidth={2.5} />}
                      </button>
                    )}
                    <span className={r.icon === pending ? "text-[#a6a6a6]" : ""}>{r.name}</span>
                    <span className="ml-[3px] text-[#929292]">{r.note}</span>
                  </span>
                </td>
                {r.cells?.map((c, i) => (
                  <td key={i} className={`overflow-hidden border-r border-b border-[#e3e5e5] whitespace-nowrap ${i === 3 ? "pr-[9px] text-right" : "pl-[6px]"}`}>
                    {c}
                  </td>
                ))}
                <td />
              </tr>
            ))}
          </tbody>
        </table>
        <div className="flex w-[15px] shrink-0 flex-col items-center border-l border-[#eee]">
          <span className="mt-2 h-[62px] w-[7px] rounded-full bg-[#c3c4c4]" />
        </div>
      </div>
    </section>
  );
}

/* ---------- run script dialog ---------- */

function RunScriptDialog() {
  return (
    <div role="dialog" aria-label="Run Script" className="absolute top-[341px] right-0 flex h-[427px] w-[669px] flex-col overflow-hidden border border-r-0 border-[#6f7271] bg-[#f6f7f7] text-black shadow-[0_2px_12px_rgba(0,0,0,0.35)]">
      <div className="flex h-[27px] shrink-0 items-center gap-[6px] bg-white pl-[7px] font-['Open_Sans',sans-serif] text-[11px]">
        <XilinxLogo />
        Run Script
      </div>
      <div className="mt-3 flex items-center pl-3">
        <span className="w-[51px] shrink-0">Look <u>i</u>n:</span>
        <Picker label="Look in" value="test" className="h-[24px] w-[567px]" icon={<FaFolderOpen size={14} className="text-[#cbcbcb]" />} />
        <div className="ml-[15px] flex w-16 shrink-0 gap-[5px] text-[#35527f]">
          <button aria-label="Up one level">
            <Glyph size={13}><path d="M8 1 L14 8 H10.5 V15 H5.5 V8 H2 Z" fill="currentColor" stroke="none" /></Glyph>
          </button>
          <button aria-label="Home">
            <Glyph size={13}><path d="M1 8 L8 2 L15 8 M3 8 V14 H13 V8" strokeWidth="2" /></Glyph>
          </button>
        </div>
      </div>
      <div className="mt-[11px] flex h-[234px] gap-[7px] pl-[11px]">
        <ul className="w-[464px] shrink-0 border-2 border-[#e2e3e3] bg-white px-[3px] py-px">
          <li className="flex h-5 items-center gap-1">
            <Glyph size={13}><path d="M2 2 H12 V11 M4 2 V13 M3 14 H15" stroke="#999" strokeWidth="1.6" /></Glyph>
            system.tcl
          </li>
        </ul>
        <div className="flex w-[300px] shrink-0 flex-col">
          <b className="mt-[11px] leading-4">Recent Directories</b>
          <Picker label="Recent Directories" value="Z:/Genesys/PROJ_2022/mymb_sys/script/test" className="mt-[4px] h-[24px]" icon={<FaFolderOpen size={11} className="text-[#cbcbcb]" />} />
          <b className="mt-[14px] leading-4">File Preview</b>
          <div className="mt-[3px] flex-1 border-2 border-[#e2e3e3] bg-white px-1 py-[2px] text-[#8d8d8d]">Select a file to preview.</div>
        </div>
      </div>
      <div className="mt-[10px] grid grid-cols-[73px_640px] items-center gap-y-[5px] pl-3">
        <label htmlFor="file-name">File <u>n</u>ame:</label>
        <input id="file-name" className="h-[25px] border-2 border-[#5b7fae] bg-white px-1 outline-none" />
        <span>Files of <u>t</u>ype:</span>
        <Picker label="Files of type" value="Tcl Files (.tcl)" className="h-[24px]" />
      </div>
    </div>
  );
}

/* ---------- input method bars ---------- */

const keyboard = (cls: string) => (
  <svg viewBox="0 0 20 16" className={cls} fill="none" stroke="currentColor" strokeWidth="1.8">
    <rect x="1" y="1" width="18" height="14" rx="1.5" />
    <path d="M1 5.5 H19 M1 10 H19 M5.5 1 V10 M10 1 V10 M14.5 1 V10 M5 12.5 H15" strokeWidth="1.2" />
  </svg>
);

const apps = (cls: string) => (
  <svg viewBox="0 0 18 18" className={cls} fill="currentColor">
    <rect x="1" y="1" width="7" height="7" rx="2" />
    <rect x="11" y="2" width="5.5" height="5.5" rx="1.5" fill="none" stroke="currentColor" strokeWidth="2" />
    <rect x="1" y="10" width="7" height="7" rx="2" />
    <rect x="10" y="10" width="7" height="7" rx="2" />
  </svg>
);

const comma = (cls: string) => (
  <svg viewBox="0 0 16 16" className={cls}>
    <circle cx="3.5" cy="4" r="2" fill="none" stroke="currentColor" strokeWidth="1.8" />
    <path d="M10 7 h4 v4 l-3 4 h-1 l1.5 -4 h-1.5 Z" fill="currentColor" />
  </svg>
);

function ImeSmall() {
  return (
    <div className="absolute right-0 bottom-[102px] flex h-[23px] w-[141px] items-center border border-[#c9dcea] bg-white text-[#0a70d0]">
      <SogouLogo className="-ml-[22px] h-[30px] w-[30px] shrink-0" />
      <div className="ml-[6px] flex flex-1 items-center justify-between pr-1 font-['Noto_Sans_CJK_SC',sans-serif]">
        <b className="text-[13px] leading-5">中</b>
        {comma("w-[11px]")}
        <FaMicrophone size={13} />
        {keyboard("w-[14px]")}
        <FaTshirt size={14} />
        {apps("w-[13px]")}
      </div>
    </div>
  );
}

function ImeLarge() {
  return (
    <div className="absolute right-0 bottom-24 flex h-8 w-[272px] items-center border border-r-0 border-[#b9d2e8] bg-white text-[#0a70d8]">
      <SogouLogo className="-ml-[12px] h-[42px] w-[42px] shrink-0" />
      <div className="ml-[6px] flex flex-1 items-center justify-between pr-[6px] font-['Noto_Sans_CJK_SC',sans-serif]">
        <b className="text-[18px] leading-7">中</b>
        {comma("w-[15px]")}
        <svg viewBox="0 0 18 18" className="w-[18px]">
          <circle cx="9" cy="9" r="9" fill="currentColor" />
          <path d="M6 4 V7 M12 4 V7" stroke="#fff" strokeWidth="2" />
          <path d="M4 9.5 H14 Q13 14 9 14 Q5 14 4 9.5 Z" fill="#fff" />
        </svg>
        <FaMicrophone size={18} />
        {keyboard("w-[19px]")}
        <svg viewBox="0 0 18 18" className="w-[17px] text-[#c4c4c4]" fill="currentColor">
          <circle cx="8" cy="5" r="5" />
          <path d="M0 18 Q0 11 8 11 L10 18 Z" />
          <rect x="10" y="9" width="7" height="8" fill="#fff" stroke="currentColor" />
          <path d="M12 12 H15 M12 14 H15" stroke="currentColor" />
        </svg>
        <FaTshirt size={18} />
        {apps("w-[18px]")}
      </div>
    </div>
  );
}

/* ---------- taskbars ---------- */

const remoteApps: { name: string; icon: ReactNode; running?: boolean; active?: boolean }[] = [
  { name: "Start", icon: <FaWindows size={15} className="text-white" /> },
  { name: "Explorer", icon: <Explorer size={15} />, running: true },
  { name: "Edge", icon: <EdgeIcon size={15} /> },
  { name: "Browser", icon: <GreenE size={16} />, running: true },
  { name: "Netdisk", icon: <CloudRings size={15} /> },
  { name: "Notepad++", icon: <Notepad size={15} /> },
  {
    name: "XCOM",
    icon: (
      <svg width="17" height="15" viewBox="0 0 17 15" fontFamily="Liberation Sans, sans-serif" fontWeight="700" fill="#d3161c">
        <text x="1" y="7" fontSize="7">ATK</text>
        <text x="0" y="14" fontSize="6">XCOM</text>
      </svg>
    ),
  },
  {
    name: "Remote shell",
    icon: (
      <svg width="16" height="15" viewBox="0 0 16 15">
        <rect x="1" y="1" width="14" height="9" fill="#222" stroke="#bbb" />
        <path d="M3 3 L5 5 L3 6" stroke="#fff" fill="none" />
        <path d="M6 6 L9 8 L8 12 Z" fill="#e33" />
        <path d="M14 5 L15 10 L11 9 Z" fill="#36c" />
        <path d="M8 11 L12 10 L11 15 Z" fill="#4c4" />
      </svg>
    ),
  },
  {
    name: "Diagrams",
    icon: (
      <svg width="15" height="15" viewBox="0 0 15 15">
        <rect width="15" height="15" fill="#f08705" />
        <path d="M7.5 4 L4 11 M7.5 4 L11 11" stroke="#fff" />
        <path d="M5 2 H10 V6 H5 Z M2 9 H6 V13 H2 Z M9 9 H13 V13 H9 Z" fill="#fff" />
      </svg>
    ),
  },
  { name: "Command Prompt", icon: <Terminal size={16} label="C:\." />, running: true },
  {
    name: "Snipping",
    icon: (
      <svg width="16" height="15" viewBox="0 0 16 15">
        <ellipse cx="7" cy="6" rx="7" ry="4.5" fill="#e8e8e8" stroke="#c33" transform="rotate(-20 7 6)" />
        <path d="M6 9 L13 12 M8 13 L11 8" stroke="#2a6ab0" strokeWidth="1.6" />
      </svg>
    ),
  },
  { name: "PDF Viewer", icon: <PdfEye size={15} />, running: true },
  { name: "Vivado", icon: <XilinxLogo size={15} />, running: true },
  { name: "Vivado project", icon: <XilinxLogo size={15} />, running: true, active: true },
];

function Chip({ className, children }: { className: string; children?: ReactNode }) {
  return <span className={`flex h-[14px] w-[14px] items-center justify-center overflow-hidden rounded-xs text-[8px] font-bold text-white ${className}`}>{children}</span>;
}

function RemoteTaskbar() {
  return (
    <footer className="flex h-[27px] shrink-0 items-stretch bg-[#24333a] text-white">
      <div className="grid w-[472px] grid-cols-14">
        {remoteApps.map((a) => (
          <button
            key={a.name}
            aria-label={a.name}
            className={`flex items-center justify-center border-b-2 ${a.running ? "border-[#6fb0e8]" : "border-transparent"} ${a.active ? "bg-[#52626a]" : ""}`}
          >
            {a.icon}
          </button>
        ))}
      </div>
      <div className="ml-auto flex items-center gap-[8px] pr-[10px]">
        <Chip className="rounded-full bg-[#0a84e0]">
          <Glyph size={10}><path d="M4 5 L11 11 L8 14 V2 L11 5 L4 11" stroke="#fff" strokeWidth="1.6" /></Glyph>
        </Chip>
        <Chip className="bg-[#1d63e8]"><span className="h-[6px] w-[9px] rounded-full bg-white" /></Chip>
        <Glyph size={15} className="text-white">
          <path d="M1 3 L15 1 V13 L1 14 Z M5 5 V11 M5 8 L9 5" strokeWidth="1.4" />
          <circle cx="12" cy="12" r="3.5" fill="#f39c12" stroke="none" />
        </Glyph>
        <Glyph size={15}>
          <path d="M8 0 L15 2 V8 Q14 13 8 16 Q2 13 1 8 V2 Z" fill="#fff" stroke="none" />
          <path d="M8 1.5 L13.5 3 V8 Q13 12 8 14.5 Q3 12 2.5 8 V3 Z" fill="#1766d8" stroke="none" />
          <path d="M4 6 L8 10 L12 6" stroke="#fff" strokeWidth="2" />
        </Glyph>
        <CloudRings size={14} />
        <Chip className="bg-[#dc1f2e]">ycl</Chip>
        <Chip className="bg-[#ea5a1c]">
          <Glyph size={12}><path d="M2 3 L8 8 L2 12 Z M8 4 L13 8 L8 11 Z" fill="#fff" stroke="none" /></Glyph>
        </Chip>
        <Glyph size={13}><path d="M12 2 H4 V7 H10 M4 7 V13 H12 M8 1 L14 4" stroke="#d0141c" strokeWidth="2" /></Glyph>
        <Glyph size={14} className="text-[#ddd]"><path d="M5 1 H10 V5 H5 Z M3 5 H12 V15 H3 Z M10 11 L12 13 L15 9" /></Glyph>
        <Glyph size={14}>
          <path d="M7 0 L13 2 V8 Q12 12 7 14 Q2 12 1 8 V2 Z" fill="#fff" stroke="none" />
          <path d="M7 1 V13 M1 7 H13" stroke="#24333a" />
          <circle cx="11" cy="11" r="4.5" fill="#1a9c4b" stroke="none" />
          <path d="M9 11 L10.5 12.5 L13.5 9.5" stroke="#fff" strokeWidth="1.4" />
        </Glyph>
        <Glyph size={13} className="text-[#ccc]"><path d="M1 15 A14 14 0 0 1 15 2 M5 15 A10 10 0 0 1 15 6 M9 15 A6 6 0 0 1 15 10" strokeWidth="1.3" /><circle cx="13" cy="14" r="1.5" fill="currentColor" /></Glyph>
        <Volume2 size={16} strokeWidth={1.7} />
        <time className="font-['Open_Sans',sans-serif] text-[11px]">11:30</time>
      </div>
    </footer>
  );
}

const hostApps: { name: string; icon: ReactNode; running?: boolean }[] = [
  {
    name: "Start",
    icon: (
      <svg width="30" height="30" viewBox="0 0 30 30">
        <path d="M1 1 H14 V14 H1 Z" fill="#3cb9f2" />
        <path d="M15 1 H29 V14 H15 Z" fill="#239fe6" />
        <path d="M1 15 H14 V29 H1 Z" fill="#1a91de" />
        <path d="M15 15 H29 V29 H15 Z" fill="#0a76d0" />
      </svg>
    ),
  },
  {
    name: "Task view",
    icon: (
      <svg width="30" height="30" viewBox="0 0 30 30">
        <rect x="0" y="9" width="23" height="20" rx="1" fill="#333" />
        <rect x="8" y="1" width="22" height="20" rx="1" fill="#f1f1f1" />
        <rect x="8" y="9" width="15" height="12" fill="#bdbdbd" />
      </svg>
    ),
  },
  { name: "Explorer", icon: <Explorer size={30} />, running: true },
  { name: "Edge", icon: <EdgeIcon size={30} /> },
  { name: "Browser", icon: <GreenE size={30} />, running: true },
  {
    name: "Visual Studio Code",
    icon: (
      <svg width="30" height="30" viewBox="0 0 30 30">
        <path d="M22 0 L0 19 V21 L3 23 L5 23 L22 9 Z" fill="#0a6cb8" />
        <path d="M0 9 L3 7 L5 7 L22 21 V30 L0 11 Z" fill="#0b80cc" />
        <path d="M22 0 L30 4 V26 L22 30 Z" fill="#2aa5ef" />
      </svg>
    ),
    running: true,
  },
  { name: "Notepad++", icon: <Notepad size={30} />, running: true },
  { name: "Command Prompt", icon: <Terminal size={30} label={"C:\\.__"} /> },
  { name: "PDF Viewer", icon: <PdfEye size={30} />, running: true },
  {
    name: "WPS Office",
    icon: (
      <svg width="30" height="30" viewBox="0 0 30 30">
        <path d="M0 4 H11 L12 8 H6 L11 20 L14 12 L18 20 L14 27 H9 Z" fill="#e8281c" />
        <path d="M13 4 H18 L22 17 L17 27 Z" fill="#f6502c" />
        <path d="M20 4 H30 L22 27 H18 L24 8 H19 Z" fill="#ff3a20" />
      </svg>
    ),
    running: true,
  },
  { name: "Vivado", icon: <XilinxLogo size={30} />, running: true },
  {
    name: "Remote desktop",
    icon: (
      <svg width="30" height="30" viewBox="0 0 30 30">
        <rect width="30" height="30" rx="6" fill="#ee1467" />
        <path d="M6 5 L15 11 L24 11 V25 L15 19 L6 20 Z" fill="#fff" />
        <path d="M6 20 L24 11" stroke="#ee1467" />
      </svg>
    ),
    running: true,
  },
  {
    name: "Paint",
    icon: (
      <svg width="30" height="30" viewBox="0 0 30 30">
        <path d="M16 1 C25 1 29 8 28 16 C27 24 20 29 14 28 C9 27 13 22 8 22 C4 22 1 27 1 19 C1 9 7 1 16 1 Z" fill="#2c9fe8" />
        <circle cx="15" cy="7" r="3" fill="#f2b01e" />
        <circle cx="8" cy="10" r="2.5" fill="#2f9e3a" />
        <circle cx="5" cy="16" r="2.5" fill="#d1502c" />
        <circle cx="15" cy="17" r="2" fill="#dff0fd" />
        <path d="M19 10 H26 L24 17 H21 Z" fill="#f0d9a8" />
        <path d="M21 17 H24 V30 H21 Z" fill="#a9651c" />
      </svg>
    ),
    running: true,
  },
];

function HostTaskbar() {
  return (
    <footer className="flex h-[60px] shrink-0 items-stretch bg-linear-to-r from-[#e3eef8] via-[#d6e1f7] to-[#e3eefa] text-black">
      <div className="ml-[13px] grid w-[717px] grid-cols-13">
        {hostApps.map((a) => (
          <button key={a.name} aria-label={a.name} className="flex flex-col items-center justify-center gap-[5px] pt-[8px]">
            {a.icon}
            <span className={`h-1 w-2 rounded-full ${a.running ? "bg-[#84898f]" : ""}`} />
          </button>
        ))}
      </div>
      <div className="ml-auto flex items-center pr-[19px]">
        <div className="flex items-center gap-[11px]">
          <ChevronUp size={20} strokeWidth={1.7} />
          <span className="flex h-[19px] w-[19px] items-center justify-center rounded-sm bg-[#d5202f] text-[11px] font-bold text-white">ycl</span>
          <span className="flex h-[19px] w-[19px] items-center justify-center rounded-sm bg-[#ee1467]">
            <Glyph size={13}><path d="M2 2 L8 5 L14 5 V14 L8 11 L2 11 Z" fill="#fff" stroke="none" /></Glyph>
          </span>
          <svg width="20" height="17" viewBox="0 0 20 17">
            <ellipse cx="7" cy="6" rx="7" ry="6" fill="#2cc45e" />
            <path d="M2 10 L2 14 L6 11 Z" fill="#2cc45e" />
            <ellipse cx="14" cy="11" rx="5.5" ry="4.5" fill="#e3e6e8" />
            <circle cx="4.5" cy="5" r="1" fill="#126b30" />
            <circle cx="9" cy="5" r="1" fill="#126b30" />
          </svg>
          <span className="flex h-[19px] w-[19px] items-center justify-center rounded-sm bg-[#3eb5fa]">
            <Glyph size={14} className="text-white"><path d="M3 12 H12 A3 3 0 0 0 12 6 A4 4 0 0 0 5 7 A2.5 2.5 0 0 0 3 12 Z" strokeWidth="1.5" /></Glyph>
          </span>
        </div>
        <svg width="19" height="20" viewBox="0 0 19 20" className="ml-4" fill="none">
          <path d="M2 5 H17 V14 H2 Z M9.5 0 V20" stroke="#555" strokeWidth="3.4" />
          <path d="M2 5 H17 V14 H2 Z M9.5 1 V19" stroke="#fff" strokeWidth="1.4" />
        </svg>
        <SogouLogo className="ml-[27px] h-[21px] w-[21px]" />
        <div className="ml-[26px] flex items-center gap-[10px] pt-px">
          <Wifi size={20} strokeWidth={1.6} />
          <VolumeX size={20} strokeWidth={1.6} />
          <svg width="21" height="14" viewBox="0 0 21 14">
            <rect x="1" y="1" width="16" height="12" rx="3" fill="none" stroke="#111" strokeWidth="2" />
            <rect x="3" y="3" width="5" height="8" fill="#111" />
            <path d="M19 5 V9" stroke="#111" strokeWidth="2" />
          </svg>
        </div>
        <div className="ml-[24px] text-right font-['Open_Sans',sans-serif] text-[13px] leading-5">
          <div>11:33</div>
          <div>2023/7/21</div>
        </div>
      </div>
    </footer>
  );
}

export default function App() {
  return (
    <div className="relative flex min-h-screen flex-col overflow-hidden bg-black font-['Liberation_Sans',Arial,sans-serif] text-[11px]">
      <div className="flex h-10 shrink-0 items-center text-[#c9c9c9]">
        <div className="flex h-full w-[264px] items-center bg-[#202020] pl-[9px] font-['Open_Sans','Noto_Sans_CJK_SC',sans-serif] text-[15px]">
          <svg width="14" height="14" viewBox="0 0 14 14" fill="#27a844">
            <path d="M0 9 H3 V13 H0 Z M5 5 H8 V13 H5 Z M10 1 H13 V13 H10 Z" />
          </svg>
          <span className="ml-[3px] text-[#a0a4a6]">holt</span>
          <span className="ml-auto text-[#e5304e]">办公</span>
          <button aria-label="Close tab" className="mr-[11px] ml-[12px]"><X size={15} strokeWidth={1.5} /></button>
        </div>
        <button aria-label="New tab" className="ml-4"><Plus size={21} strokeWidth={1.5} /></button>
        <div className="ml-auto flex items-center gap-[41px] pr-[20px]">
          <button aria-label="Minimize"><Minus size={18} strokeWidth={1.5} /></button>
          <button aria-label="Maximize" className="h-[13px] w-[13px] border border-[#c9c9c9]" />
          <button aria-label="Close"><X size={18} strokeWidth={1.3} /></button>
        </div>
      </div>

      <main className="relative mx-[89px] flex flex-1 flex-col overflow-hidden bg-white">
        <AppHeader />
        <div className="flex flex-1 items-stretch">
          <div className="w-[17px] shrink-0 pt-px">
            <button className="h-[181px] w-[17px] rounded-r-sm border border-l-0 border-[#c3c6c8] bg-[#f7f8f8]">
              <span className="inline-block rotate-180 [writing-mode:vertical-rl]">Flow Navigator</span>
            </button>
          </div>
          <div className="flex min-w-0 flex-1 flex-col">
            <div className="ml-px flex h-[27px] shrink-0 items-center bg-[#cddffb] pl-2 text-black">
              <b>BLOCK DESIGN</b>&nbsp;- system
              <b className="ml-auto text-[14px] text-[#7f8b99]">?</b>
              <button aria-label="Close design" className="mr-[6px] ml-[6px] text-[#7f8b99]"><X size={14} strokeWidth={2.2} /></button>
            </div>
            <div className="flex flex-1 flex-col gap-[12px] pt-[9px] pr-[9px] pb-1 pl-[7px]">
              <div className="flex min-h-0 flex-1 gap-3">
                <SourcesPanel />
                <DiagramPanel />
              </div>
              <ReportsPanel />
            </div>
          </div>
        </div>
        <div className="h-5 shrink-0 bg-[#efefef]" />
        <RemoteTaskbar />

        <RunScriptDialog />
        <span className="absolute right-0 bottom-[33px] h-[53px] w-[9px] rounded-l bg-[#4a4f5c]" />
        <ImeSmall />
      </main>

      <div className="absolute top-[45px] left-1/2 flex h-[30px] w-[160px] -translate-x-1/2 items-center bg-[#464646] font-['Noto_Sans_CJK_SC',sans-serif] text-[15px] text-white">
        <button aria-label="Expand screen bar" className="flex w-[78px] justify-center pl-1"><ChevronDown size={17} strokeWidth={1.5} /></button>
        <span className="h-[14px] w-px bg-[#777]" />
        <button className="flex-1">屏幕1</button>
      </div>

      <ImeLarge />
      <HostTaskbar />
      <span className="pointer-events-none absolute right-[14px] bottom-[5px] font-['Open_Sans','Noto_Sans_CJK_SC',sans-serif] text-[20px] leading-6 whitespace-nowrap text-[#85898e]/80 [text-shadow:1px_1px_0_rgba(255,255,255,0.6)]">
        CSDN @请叫我小黑
      </span>
    </div>
  );
}
